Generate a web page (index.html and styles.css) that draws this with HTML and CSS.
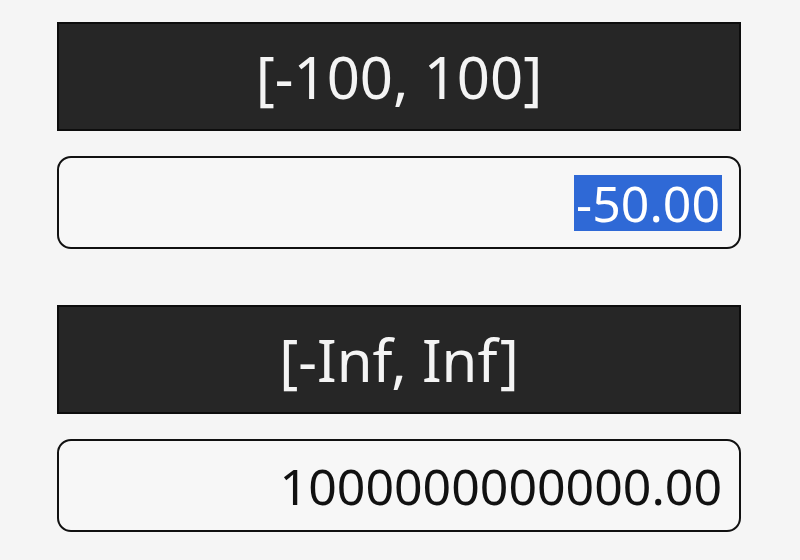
FILE: index.html
```html
<!DOCTYPE html>
<html lang="en">
<head>
    <meta charset="UTF-8">
    <meta name="viewport" content="width=device-width, initial-scale=1.0">
    <title>Range Inputs</title>
    <link rel="stylesheet" href="styles.css">
</head>
<body>
    <div class="container">
        <div class="group">
            <div class="label">[-100, 100]</div>
            <div class="field"><span class="selected">-50.00</span></div>
        </div>
        <div class="group">
            <div class="label">[-Inf, Inf]</div>
            <div class="field">1000000000000.00</div>
        </div>
    </div>
</body>
</html>
```

FILE: styles.css
```css
body {
    margin: 0;
    background-color: #f5f5f5;
    font-family: "Noto Sans", "Open Sans", sans-serif;
}
.container {
    width: 684px;
    padding: 22px 0 0 57px;
}
.group {
    display: flex;
    flex-direction: column;
    gap: 25px;
    margin-bottom: 56px;
}
.label {
    height: 105px;
    background-color: #262626;
    border: 2px solid #0d0d0d;
    color: #f4f4f4;
    font-size: 58px;
    display: flex;
    align-items: center;
    justify-content: center;
}
.field {
    height: 89px;
    background-color: #f7f7f7;
    border: 2px solid #111;
    border-radius: 14px;
    color: #111;
    font-size: 50px;
    display: flex;
    align-items: center;
    justify-content: flex-end;
    padding-right: 17px;
}
.selected {
    background-color: #2f69d6;
    color: #fff;
    line-height: 56px;
    padding: 0 2px;
}
```
